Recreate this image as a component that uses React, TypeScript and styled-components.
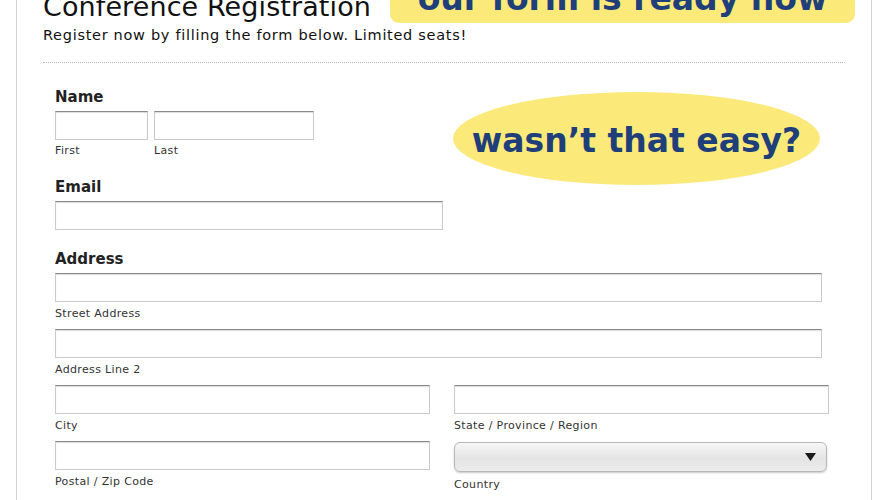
import React from "react";
import styled, { createGlobalStyle } from "styled-components";

const GlobalStyle = createGlobalStyle`
  html, body {
    margin: 0;
    padding: 0;
    background: #fff;
  }
  body {
    font-family: "DejaVu Sans", Verdana, sans-serif;
    color: #111;
    overflow: hidden;
  }
`;

const Sheet = styled.div`
  position: relative;
  margin: 0 16px;
  height: 500px;
  box-sizing: border-box;
  padding: 0 26px;
  border-left: 1px solid #d2d2d2;
  border-right: 1px solid #d2d2d2;
  overflow: hidden;
`;

const Header = styled.header`
  display: flex;
  align-items: flex-start;
  margin-top: -27px;
`;

const Title = styled.h1`
  margin: 18px 0 0;
  font-size: 27px;
  line-height: 32px;
  letter-spacing: 0.1px;
  font-weight: normal;
  color: #111;
  white-space: nowrap;
`;

const Banner = styled.div`
  margin-left: auto;
  margin-right: -10px;
  width: 465px;
  height: 50px;
  box-sizing: border-box;
  padding-top: 7px;
  background: #fbe97a;
  border-radius: 9px;
  text-align: center;
  font-weight: bold;
  font-size: 33px;
  line-height: 38px;
  color: #1f3f7a;
  white-space: nowrap;
`;

const Intro = styled.p`
  margin: 3px 0 0;
  font-size: 14.5px;
  line-height: 18px;
  letter-spacing: 0.7px;
  color: #111;
`;

const Divider = styled.hr`
  margin: 18px 0 0;
  height: 0;
  border: 0;
  border-top: 1px dotted #bcbcbc;
`;

const Form = styled.form`
  padding: 25px 0 0 12px;
`;

const Field = styled.div`
  margin-bottom: 20px;
`;

const FieldLabel = styled.div`
  margin-bottom: 5px;
  font-size: 15px;
  line-height: 18px;
  font-weight: bold;
  color: #222;
`;

const NameRow = styled.div`
  display: flex;
  gap: 6px;
`;

const Part = styled.div<{ $gap?: number }>`
  margin-bottom: ${(p) => p.$gap ?? 0}px;
`;

const TextInput = styled.input<{ $w: number }>`
  display: block;
  width: ${(p) => p.$w}px;
  height: 29px;
  box-sizing: border-box;
  margin: 0;
  padding: 0 4px;
  background: #fff;
  border: 1px solid #cacaca;
  border-top-color: #8a8a8a;
  box-shadow: inset 0 1px 1px rgba(0, 0, 0, 0.14);
  outline: none;
`;

const SubLabel = styled.div<{ $top?: number }>`
  margin-top: ${(p) => p.$top ?? 5}px;
  font-size: 11px;
  line-height: 14px;
  letter-spacing: 0.35px;
  color: #333;
`;

const TwoCols = styled.div`
  display: grid;
  grid-template-columns: 375px 375px;
  column-gap: 24px;
`;

const SelectBox = styled.div<{ $w: number }>`
  display: flex;
  align-items: center;
  justify-content: flex-end;
  width: ${(p) => p.$w}px;
  height: 30px;
  margin-top: 1px;
  box-sizing: border-box;
  padding-right: 10px;
  border: 1px solid #b8b8b8;
  border-radius: 6px;
  background: linear-gradient(#f7f7f7, #e4e4e4 55%, #ececec);
  box-shadow: 0 1px 2px rgba(0, 0, 0, 0.22);
`;

const Bubble = styled.div`
  position: absolute;
  left: 436px;
  top: 92px;
  width: 367px;
  height: 93px;
  box-sizing: border-box;
  padding-top: 4px;
  border-radius: 50%;
  background: #fbe97a;
  display: flex;
  align-items: center;
  justify-content: center;
  font-weight: bold;
  font-size: 33px;
  color: #1f3f7a;
  white-space: nowrap;
`;

export default function App() {
  return (
    <>
      <GlobalStyle />
      <Sheet>
        <Header>
          <Title>Conference Registration</Title>
          <Banner>our form is ready now</Banner>
        </Header>
        <Intro>Register now by filling the form below. Limited seats!</Intro>
        <Divider />
        <Form onSubmit={(e) => e.preventDefault()}>
          <Field>
            <FieldLabel>Name</FieldLabel>
            <NameRow>
              <Part>
                <TextInput $w={93} />
                <SubLabel $top={4}>First</SubLabel>
              </Part>
              <Part>
                <TextInput $w={160} />
                <SubLabel $top={4}>Last</SubLabel>
              </Part>
            </NameRow>
          </Field>
          <Field>
            <FieldLabel>Email</FieldLabel>
            <TextInput $w={388} />
          </Field>
          <Field>
            <FieldLabel>Address</FieldLabel>
            <Part $gap={8}>
              <TextInput $w={767} />
              <SubLabel>Street Address</SubLabel>
            </Part>
            <Part $gap={8}>
              <TextInput $w={767} />
              <SubLabel>Address Line 2</SubLabel>
            </Part>
            <TwoCols>
              <Part $gap={8}>
                <TextInput $w={375} />
                <SubLabel>City</SubLabel>
              </Part>
              <Part $gap={8}>
                <TextInput $w={375} />
                <SubLabel>State / Province / Region</SubLabel>
              </Part>
              <Part>
                <TextInput $w={375} />
                <SubLabel>Postal / Zip Code</SubLabel>
              </Part>
              <Part>
                <SelectBox $w={373}>
                  <svg width="11" height="8" viewBox="0 0 11 8">
                    <path d="M0 0H11L5.5 8Z" fill="#1a1a1a" />
                  </svg>
                </SelectBox>
                <SubLabel $top={6}>Country</SubLabel>
              </Part>
            </TwoCols>
          </Field>
        </Form>
        <Bubble>wasn’t that easy?</Bubble>
      </Sheet>
    </>
  );
}
